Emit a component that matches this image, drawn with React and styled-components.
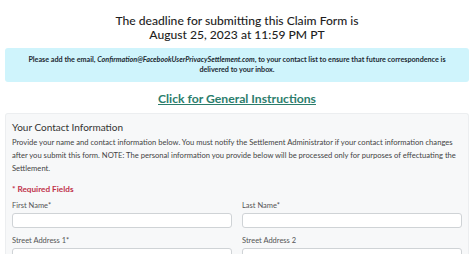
import React from "react";
import styled, { createGlobalStyle } from "styled-components";

const Global = createGlobalStyle`
  html, body { margin: 0; padding: 0; background: #fff; }
  body { font-family: Lato, "Open Sans", sans-serif; color: #212529; }
  * { box-sizing: border-box; }
`;

const Page = styled.div`
  width: 474px;
  padding: 14px 5px 0;
  display: flex;
  flex-direction: column;
  align-items: stretch;
`;

const Deadline = styled.h1`
  margin: 0;
  font-size: 12.1px;
  line-height: 14px;
  font-weight: 500;
  text-align: center;
  color: #1e1e1e;
`;

const Alert = styled.div`
  margin-top: 6px;
  height: 34px;
  background: #cff4fc;
  border-radius: 3px;
  display: flex;
  align-items: center;
  justify-content: center;
  text-align: center;
  padding: 0 12px;
  font-size: 7.2px;
  line-height: 10.4px;
  font-weight: 700;
  color: #1c2a33;
`;

const LinkWrap = styled.div`
  margin-top: 7px;
  text-align: center;
  line-height: 16px;
`;

const GeneralLink = styled.a`
  font-size: 12.2px;
  font-weight: 700;
  color: #2c7d6c;
  text-decoration: underline;
`;

const Card = styled.section`
  margin-top: 6px;
  background: #f7f8f9;
  border: 1px solid #eceef0;
  border-bottom: none;
  border-radius: 3px 3px 0 0;
  padding: 6px 6px 0;
  height: 160px;
`;

const CardTitle = styled.h2`
  margin: 0;
  font-size: 10px;
  font-weight: 400;
  line-height: 14px;
  color: #333;
`;

const Intro = styled.p`
  margin: 2px 0 0;
  font-size: 7.62px;
  line-height: 13px;
  color: #444;
`;

const Required = styled.div`
  margin-top: 8px;
  font-size: 8.2px;
  line-height: 12px;
  font-weight: 700;
  color: #c0304a;
`;

const FieldGrid = styled.div`
  margin-top: 6px;
  display: grid;
  grid-template-columns: 1fr 1fr;
  column-gap: 10px;
  row-gap: 8px;
`;

const Field = styled.label`
  display: flex;
  flex-direction: column;
  gap: 2px;
`;

const Label = styled.span`
  font-size: 7.5px;
  line-height: 10px;
  color: #555;
`;

const Input = styled.input`
  height: 15px;
  border: 1px solid #cfd3d6;
  border-radius: 3px;
  background: #fff;
  padding: 0 4px;
  font-size: 8px;
  outline: none;
`;

const fields = [
  "First Name*",
  "Last Name*",
  "Street Address 1*",
  "Street Address 2",
];

export default function App() {
  return (
    <>
      <Global />
      <Page>
        <Deadline>
          The deadline for submitting this Claim Form is
          <br />
          August 25, 2023 at 11:59 PM PT
        </Deadline>
        <Alert>
          <span>
            Please add the email,{" "}
            <i>Confirmation@FacebookUserPrivacySettlement.com</i>, to your
            contact list to ensure that future correspondence is
            <br />
            delivered to your inbox.
          </span>
        </Alert>
        <LinkWrap>
          <GeneralLink href="#">Click for General Instructions</GeneralLink>
        </LinkWrap>
        <Card>
          <CardTitle>Your Contact Information</CardTitle>
          <Intro>
            Provide your name and contact information below. You must notify
            the Settlement Administrator if your contact information changes
            after you submit this form. NOTE: The personal information you
            provide below will be processed only for purposes of effectuating
            the Settlement.
          </Intro>
          <Required>* Required Fields</Required>
          <FieldGrid>
            {fields.map((f) => (
              <Field key={f}>
                <Label>{f}</Label>
                <Input type="text" />
              </Field>
            ))}
          </FieldGrid>
        </Card>
      </Page>
    </>
  );
}
